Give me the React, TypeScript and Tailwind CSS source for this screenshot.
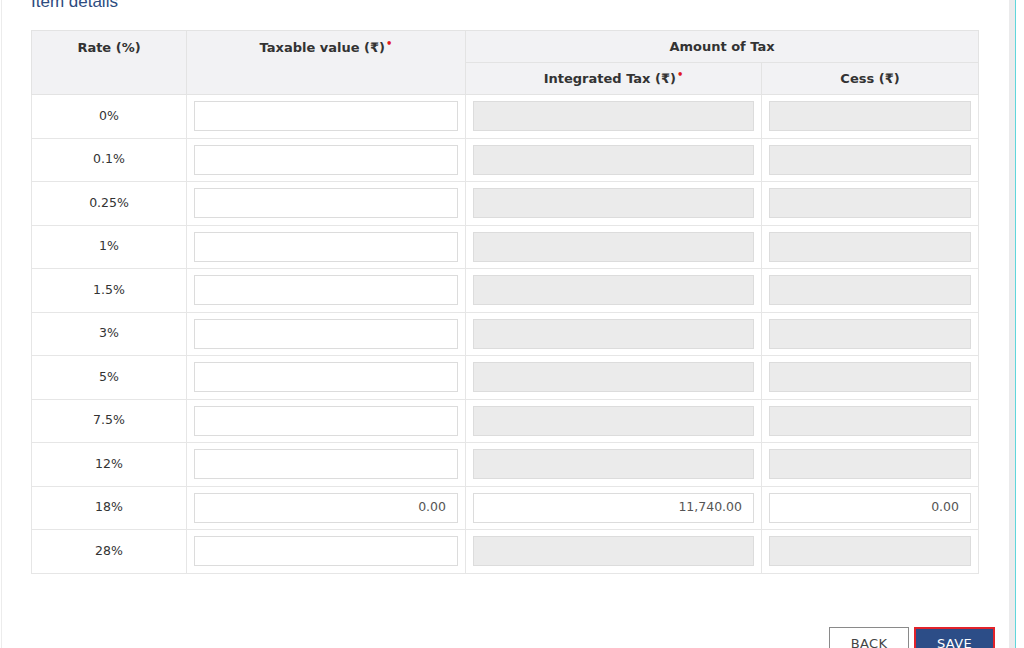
import React from "react";

// 税率ごとの行データ
const rows = [
  { rate: "0%" },
  { rate: "0.1%" },
  { rate: "0.25%" },
  { rate: "1%" },
  { rate: "1.5%" },
  { rate: "3%" },
  { rate: "5%" },
  { rate: "7.5%" },
  { rate: "12%" },
  { rate: "18%", taxable: "0.00", igst: "11,740.00", cess: "0.00" },
  { rate: "28%" },
];

const Req = () => (
  <span className="text-[#e0191f] align-top text-[10px] leading-none relative top-[1px] ml-[1px]">•</span>
);

function Field({ value, disabled }: { value?: string; disabled?: boolean }) {
  const active = value !== undefined || !disabled;
  return (
    <div
      className={
        "h-[30px] border border-[#dcdcdc] flex items-center justify-end pr-[11px] text-[12.5px] text-[#555] " +
        (active ? "bg-white" : "bg-[#ebebeb]")
      }
    >
      {value}
    </div>
  );
}

export default function App() {
  return (
    <div
      className="w-[1024px] h-[648px] overflow-hidden bg-white flex items-start"
      style={{ fontFamily: '"DejaVu Sans", Verdana, sans-serif' }}
    >
      <div className="w-[1px] h-[648px] ml-[1px] bg-[#ececec] shrink-0" />
      <div className="w-[1007px] shrink-0 pl-[29px]">
        <div
          className="h-[21px] -mt-[8px] text-[17px] leading-[20px] text-[#2d4c80]"
          style={{ fontFamily: '"Liberation Sans", Arial, sans-serif' }}
        >
          Item details
        </div>
        <div className="h-[17px]" />
        <table className="border-collapse w-[947px] table-fixed text-[12.5px] text-[#333]">
          <colgroup>
            <col className="w-[155px]" />
            <col className="w-[279px]" />
            <col className="w-[296px]" />
            <col className="w-[217px]" />
          </colgroup>
          <thead className="text-[13px]">
            <tr className="h-[32px] bg-[#f2f2f4]">
              <th rowSpan={2} className="border border-[#e3e3e3] align-top pt-[7px] font-bold">
                Rate (%)
              </th>
              <th rowSpan={2} className="border border-[#e3e3e3] align-top pt-[7px] font-bold">
                Taxable value (₹)
                <Req />
              </th>
              <th colSpan={2} className="border border-[#e3e3e3] font-bold">
                Amount of Tax
              </th>
            </tr>
            <tr className="h-[32px] bg-[#f2f2f4]">
              <th className="border border-[#e3e3e3] font-bold">
                Integrated Tax (₹)
                <Req />
              </th>
              <th className="border border-[#e3e3e3] font-bold">Cess (₹)</th>
            </tr>
          </thead>
          <tbody>
            {rows.map((r) => (
              <tr key={r.rate} className="h-[43.5px]">
                <td className="border border-[#e6e6e6] text-center">{r.rate}</td>
                <td className="border border-[#e6e6e6] px-[7px]">
                  <Field value={r.taxable} />
                </td>
                <td className="border border-[#e6e6e6] px-[7px]">
                  <Field value={r.igst} disabled />
                </td>
                <td className="border border-[#e6e6e6] px-[7px]">
                  <Field value={r.cess} disabled />
                </td>
              </tr>
            ))}
          </tbody>
        </table>
        <div className="flex justify-end gap-[5px] pr-[14px] mt-[53px]">
          <button className="w-[80px] h-[30px] border border-[#8a8a8a] bg-white text-[13px] text-[#444] tracking-wide pt-[4px]">
            BACK
          </button>
          <button className="w-[81px] h-[30px] border-2 border-[#e2232b] bg-[#2c4d87] text-[13px] text-white tracking-wide pt-[4px]">
            SAVE
          </button>
        </div>
      </div>
      <div className="w-[6px] h-[648px] shrink-0 bg-[#ebebec]" />
      <div className="w-[1px] h-[648px] shrink-0 bg-[#5fd6db]" />
    </div>
  );
}
